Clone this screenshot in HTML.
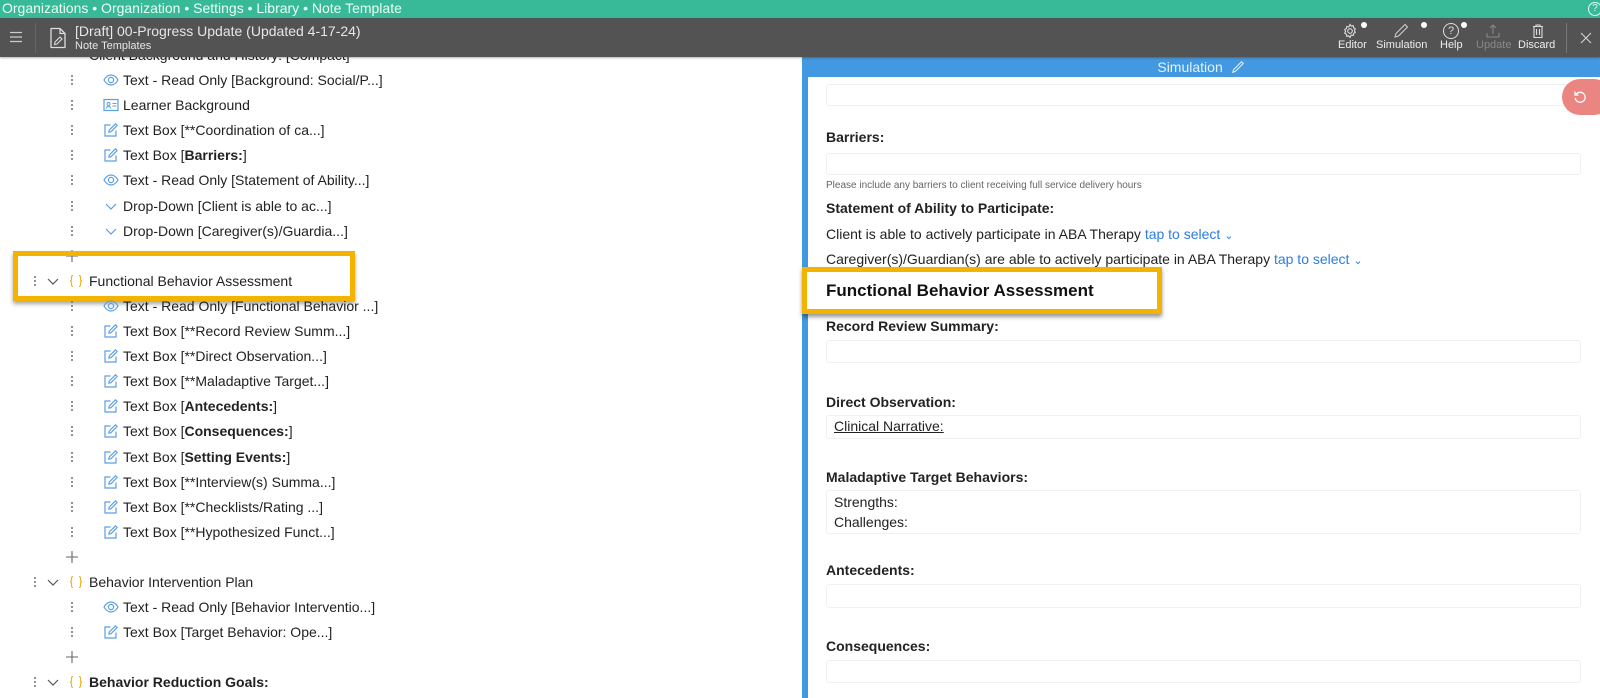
<!DOCTYPE html>
<html><head><meta charset="utf-8">
<style>
*{margin:0;padding:0;box-sizing:border-box}
body{width:1600px;height:698px;overflow:hidden;background:#fff;font-family:"Liberation Sans",sans-serif;color:#222;position:relative}
.a{position:absolute;white-space:nowrap}
.row{position:absolute;height:18px;line-height:18px;font-size:14px;color:#222}
.dots{position:absolute;width:2px;height:12px;top:3px;background:radial-gradient(circle,#777 0.9px,transparent 1.1px) 0 0/2px 4px repeat-y}
.ic{position:absolute;top:1px}
.lbl{position:absolute;font-size:14px;font-weight:bold;color:#222}
.inp{position:absolute;left:826px;width:755px;border:1px solid #f0f0f0;border-radius:3px;background:#fff}
.txt{font-size:14px;color:#222}
</style></head><body>

<div class="row" style="top:46px;left:89px;">Client Background and History: [Compact]</div>

<svg width="0" height="0" style="position:absolute">
<defs>
<symbol id="eye" viewBox="0 0 16 16"><path d="M1 8C3 4.5 5.5 3 8 3s5 1.5 7 5c-2 3.5-4.5 5-7 5S3 11.5 1 8z" fill="none" stroke="#5a9ee8" stroke-width="1.2"/><circle cx="8" cy="8" r="2.6" fill="none" stroke="#5a9ee8" stroke-width="1.2"/></symbol>
<symbol id="pen" viewBox="0 0 16 16"><path d="M13 8.5V14H2V3h5.5" fill="none" stroke="#5a9ee8" stroke-width="1.2"/><path d="M12.5 1.8l1.7 1.7L8 9.7 5.8 10.2 6.3 8z" fill="none" stroke="#5a9ee8" stroke-width="1.2" stroke-linejoin="round"/></symbol>
<symbol id="card" viewBox="0 0 16 16"><rect x="1" y="2.5" width="14" height="11" fill="none" stroke="#5a9ee8" stroke-width="1.2"/><circle cx="5.5" cy="7" r="1.5" fill="none" stroke="#5a9ee8" stroke-width="1"/><path d="M3 11.5c.5-1.5 1.5-2 2.5-2s2 .5 2.5 2M9.5 6.5h4M9.5 9h4" stroke="#5a9ee8" stroke-width="1" fill="none"/></symbol>
<symbol id="chev" viewBox="0 0 16 16"><path d="M3 6l5 5 5-5" fill="none" stroke="#5a9ee8" stroke-width="1.2"/></symbol>
<symbol id="chevg" viewBox="0 0 16 16"><path d="M3 6l5 5 5-5" fill="none" stroke="#555" stroke-width="1.2"/></symbol>
<symbol id="br" viewBox="0 0 16 16"><path d="M5 2.5C3.5 2.5 3.5 3.5 3.5 5v1.5C3.5 7.5 2.5 8 2 8c.5 0 1.5.5 1.5 1.5V11c0 1.5 0 2.5 1.5 2.5M11 2.5c1.5 0 1.5 1 1.5 2.5v1.5c0 1 1 1.5 1.5 1.5-.5 0-1.5.5-1.5 1.5V11c0 1.5 0 2.5-1.5 2.5" fill="none" stroke="#f0b429" stroke-width="1.2"/></symbol>
<symbol id="plus" viewBox="0 0 16 16"><path d="M8 2v12M2 8h12" stroke="#666" stroke-width="1.1"/></symbol>
</defs></svg>

<div class="row" style="top:71px;left:0"><div class="dots" style="left:71px"></div><svg class="ic" style="left:103px" width="16" height="16"><use href="#eye"/></svg><span class="a" style="left:123px">Text - Read Only [Background: Social/P...]</span></div>
<div class="row" style="top:96px;left:0"><div class="dots" style="left:71px"></div><svg class="ic" style="left:103px" width="16" height="16"><use href="#card"/></svg><span class="a" style="left:123px">Learner Background</span></div>
<div class="row" style="top:121px;left:0"><div class="dots" style="left:71px"></div><svg class="ic" style="left:103px" width="16" height="16"><use href="#pen"/></svg><span class="a" style="left:123px">Text Box [**Coordination of ca...]</span></div>
<div class="row" style="top:146px;left:0"><div class="dots" style="left:71px"></div><svg class="ic" style="left:103px" width="16" height="16"><use href="#pen"/></svg><span class="a" style="left:123px">Text Box [<b>Barriers:</b>]</span></div>
<div class="row" style="top:171px;left:0"><div class="dots" style="left:71px"></div><svg class="ic" style="left:103px" width="16" height="16"><use href="#eye"/></svg><span class="a" style="left:123px">Text - Read Only [Statement of Ability...]</span></div>
<div class="row" style="top:197px;left:0"><div class="dots" style="left:71px"></div><svg class="ic" style="left:103px" width="16" height="16"><use href="#chev"/></svg><span class="a" style="left:123px">Drop-Down [Client is able to ac...]</span></div>
<div class="row" style="top:222px;left:0"><div class="dots" style="left:71px"></div><svg class="ic" style="left:103px" width="16" height="16"><use href="#chev"/></svg><span class="a" style="left:123px">Drop-Down [Caregiver(s)/Guardia...]</span></div>
<div class="row" style="top:247px;left:0"><svg class="ic" style="left:64px" width="16" height="16"><use href="#plus"/></svg></div>

<div class="row" style="top:272px;left:0"><div class="dots" style="left:34px"></div><svg class="ic" style="left:45px" width="16" height="16"><use href="#chevg"/></svg><svg class="ic" style="left:68px" width="16" height="16"><use href="#br"/></svg><span class="a" style="left:89px">Functional Behavior Assessment</span></div>
<div class="a" style="left:13px;top:251px;width:342px;height:50px;border:5px solid #f5b301;box-shadow:0 3px 4px rgba(0,0,0,.35)"></div>

<div class="row" style="top:297px;left:0"><div class="dots" style="left:71px"></div><svg class="ic" style="left:103px" width="16" height="16"><use href="#eye"/></svg><span class="a" style="left:123px">Text - Read Only [Functional Behavior ...]</span></div>
<div class="row" style="top:322px;left:0"><div class="dots" style="left:71px"></div><svg class="ic" style="left:103px" width="16" height="16"><use href="#pen"/></svg><span class="a" style="left:123px">Text Box [**Record Review Summ...]</span></div>
<div class="row" style="top:347px;left:0"><div class="dots" style="left:71px"></div><svg class="ic" style="left:103px" width="16" height="16"><use href="#pen"/></svg><span class="a" style="left:123px">Text Box [**Direct Observation...]</span></div>
<div class="row" style="top:372px;left:0"><div class="dots" style="left:71px"></div><svg class="ic" style="left:103px" width="16" height="16"><use href="#pen"/></svg><span class="a" style="left:123px">Text Box [**Maladaptive Target...]</span></div>
<div class="row" style="top:397px;left:0"><div class="dots" style="left:71px"></div><svg class="ic" style="left:103px" width="16" height="16"><use href="#pen"/></svg><span class="a" style="left:123px">Text Box [<b>Antecedents:</b>]</span></div>
<div class="row" style="top:422px;left:0"><div class="dots" style="left:71px"></div><svg class="ic" style="left:103px" width="16" height="16"><use href="#pen"/></svg><span class="a" style="left:123px">Text Box [<b>Consequences:</b>]</span></div>
<div class="row" style="top:448px;left:0"><div class="dots" style="left:71px"></div><svg class="ic" style="left:103px" width="16" height="16"><use href="#pen"/></svg><span class="a" style="left:123px">Text Box [<b>Setting Events:</b>]</span></div>
<div class="row" style="top:473px;left:0"><div class="dots" style="left:71px"></div><svg class="ic" style="left:103px" width="16" height="16"><use href="#pen"/></svg><span class="a" style="left:123px">Text Box [**Interview(s) Summa...]</span></div>
<div class="row" style="top:498px;left:0"><div class="dots" style="left:71px"></div><svg class="ic" style="left:103px" width="16" height="16"><use href="#pen"/></svg><span class="a" style="left:123px">Text Box [**Checklists/Rating ...]</span></div>
<div class="row" style="top:523px;left:0"><div class="dots" style="left:71px"></div><svg class="ic" style="left:103px" width="16" height="16"><use href="#pen"/></svg><span class="a" style="left:123px">Text Box [**Hypothesized Funct...]</span></div>
<div class="row" style="top:548px;left:0"><svg class="ic" style="left:64px" width="16" height="16"><use href="#plus"/></svg></div>

<div class="row" style="top:573px;left:0"><div class="dots" style="left:34px"></div><svg class="ic" style="left:45px" width="16" height="16"><use href="#chevg"/></svg><svg class="ic" style="left:68px" width="16" height="16"><use href="#br"/></svg><span class="a" style="left:89px">Behavior Intervention Plan</span></div>
<div class="row" style="top:598px;left:0"><div class="dots" style="left:71px"></div><svg class="ic" style="left:103px" width="16" height="16"><use href="#eye"/></svg><span class="a" style="left:123px">Text - Read Only [Behavior Interventio...]</span></div>
<div class="row" style="top:623px;left:0"><div class="dots" style="left:71px"></div><svg class="ic" style="left:103px" width="16" height="16"><use href="#pen"/></svg><span class="a" style="left:123px">Text Box [Target Behavior: Ope...]</span></div>
<div class="row" style="top:648px;left:0"><svg class="ic" style="left:64px" width="16" height="16"><use href="#plus"/></svg></div>
<div class="row" style="top:673px;left:0"><div class="dots" style="left:34px"></div><svg class="ic" style="left:45px" width="16" height="16"><use href="#chevg"/></svg><svg class="ic" style="left:68px" width="16" height="16"><use href="#br"/></svg><span class="a" style="left:89px;font-weight:bold">Behavior Reduction Goals:</span></div>

<!-- right panel -->
<div class="a" style="left:802px;top:57px;width:798px;height:641px;background:#fff;border-left:6px solid #4299e1"></div>
<div class="a" style="left:802px;top:57px;width:798px;height:20px;background:#4299e1;color:#e6f1fc;font-size:14px;line-height:20px;text-align:center">Simulation <svg width="14" height="14" viewBox="0 0 16 16" style="vertical-align:-2px;margin-left:4px"><path d="M12 2l2 2-9 9-3 1 1-3z" fill="none" stroke="#e6f1fc" stroke-width="1.2"/></svg></div>

<div class="inp" style="top:84px;height:22px"></div>
<div class="lbl" style="left:826px;top:129px">Barriers:</div>
<div class="inp" style="top:153px;height:22px"></div>
<div class="a" style="left:826px;top:180px;font-size:10px;color:#666">Please include any barriers to client receiving full service delivery hours</div>
<div class="lbl" style="left:826px;top:200px">Statement of Ability to Participate:</div>
<div class="a txt" style="left:826px;top:226px">Client is able to actively participate in ABA Therapy <span style="color:#2b7de0">tap to select</span> <span style="color:#2b7de0;font-size:11px">&#8964;</span></div>
<div class="a txt" style="left:826px;top:251px">Caregiver(s)/Guardian(s) are able to actively participate in ABA Therapy <span style="color:#2b7de0">tap to select</span> <span style="color:#2b7de0;font-size:11px">&#8964;</span></div>
<div class="a" style="left:802px;top:267px;width:360px;height:47px;border:5px solid #f5b301;background:#fff;box-shadow:0 3px 4px rgba(0,0,0,.4)"></div>
<div class="a" style="left:826px;top:281px;font-size:17px;font-weight:bold;color:#111">Functional Behavior Assessment</div>
<div class="lbl" style="left:826px;top:318px">Record Review Summary:</div>
<div class="inp" style="top:340px;height:23px"></div>
<div class="lbl" style="left:826px;top:394px">Direct Observation:</div>
<div class="inp" style="top:415px;height:24px"></div>
<div class="a txt" style="left:834px;top:418px;text-decoration:underline">Clinical Narrative:</div>
<div class="lbl" style="left:826px;top:469px">Maladaptive Target Behaviors:</div>
<div class="inp" style="top:490px;height:44px"></div>
<div class="a txt" style="left:834px;top:494px">Strengths:</div>
<div class="a txt" style="left:834px;top:514px">Challenges:</div>
<div class="lbl" style="left:826px;top:562px">Antecedents:</div>
<div class="inp" style="top:584px;height:24px"></div>
<div class="lbl" style="left:826px;top:638px">Consequences:</div>
<div class="inp" style="top:660px;height:23px"></div>

<div class="a" style="left:1562px;top:79px;width:50px;height:36px;border-radius:18px;background:#eb8582"></div>
<svg class="a" style="left:1572px;top:89px" width="16" height="16" viewBox="0 0 16 16"><path d="M4 5.5A5 5 0 1 1 3.2 9" fill="none" stroke="#fff" stroke-width="1.3"/><path d="M3 2.5v3.5h3.5" fill="none" stroke="#fff" stroke-width="1.3"/></svg>

<!-- top bars -->
<div class="a" style="left:0;top:0;width:1600px;height:18px;background:#38b997;color:#eafff7;font-size:14px;line-height:17px;padding-left:2px">Organizations • Organization • Settings • Library • Note Template</div>
<div class="a" style="left:1588px;top:2px;width:14px;height:14px;border:1.3px solid #dff;border-radius:50%;color:#dff;font-size:10px;line-height:12px;text-align:center">?</div>
<div class="a" style="left:0;top:18px;width:1600px;height:39px;background:#535353;box-shadow:0 1px 2px rgba(0,0,0,.3)"></div>
<svg class="a" style="left:9px;top:31px" width="14" height="12"><path d="M1 1.5h12M1 6h12M1 10.5h12" stroke="#ccc" stroke-width="1.2"/></svg>
<div class="a" style="left:35px;top:23px;width:1px;height:30px;background:#666"></div>
<svg class="a" style="left:49px;top:27px" width="18" height="22" viewBox="0 0 18 22"><path d="M2 1.5h9l5 5V20.5H2z" fill="none" stroke="#ddd" stroke-width="1.3" stroke-linejoin="round"/><path d="M11 1.5v5h5" fill="none" stroke="#ddd" stroke-width="1.2"/><path d="M11 10l2 2-5 5-2.5.5.5-2.5z" fill="none" stroke="#ddd" stroke-width="1.1"/></svg>
<div class="a" style="left:75px;top:23px;font-size:14px;color:#e6e6e6">[Draft] 00-Progress Update (Updated 4-17-24)</div>
<div class="a" style="left:75px;top:40px;font-size:11px;color:#e6e6e6">Note Templates</div>

<svg class="a" style="left:1342px;top:23px" width="16" height="16" viewBox="0 0 16 16"><circle cx="8" cy="8" r="2.3" fill="none" stroke="#ddd" stroke-width="1.1"/><path d="M8 1.5l1.2 1.6 2-.4.4 2 1.7 1.1-.9 1.8.9 1.8-1.7 1.1-.4 2-2-.4L8 14.5l-1.2-1.6-2 .4-.4-2-1.7-1.1.9-1.8-.9-1.8 1.7-1.1.4-2 2 .4z" fill="none" stroke="#ddd" stroke-width="1.1"/></svg>
<div class="a" style="left:1361px;top:22px;width:6px;height:6px;border-radius:50%;background:#fff"></div>
<div class="a" style="left:1338px;top:39px;font-size:11px;color:#eee">Editor</div>
<svg class="a" style="left:1393px;top:23px" width="16" height="16" viewBox="0 0 16 16"><path d="M12 1.5l2.5 2.5-9 9L2 14l1-3.5z" fill="none" stroke="#ccc" stroke-width="1.1"/></svg>
<div class="a" style="left:1421px;top:22px;width:6px;height:6px;border-radius:50%;background:#fff"></div>
<div class="a" style="left:1376px;top:39px;font-size:11px;color:#eee">Simulation</div>
<div class="a" style="left:1443px;top:23px;width:16px;height:16px;border:1.2px solid #ddd;border-radius:50%;color:#ddd;font-size:11px;line-height:14px;text-align:center">?</div>
<div class="a" style="left:1461px;top:22px;width:6px;height:6px;border-radius:50%;background:#fff"></div>
<div class="a" style="left:1440px;top:39px;font-size:11px;color:#eee">Help</div>
<svg class="a" style="left:1485px;top:23px" width="16" height="16" viewBox="0 0 16 16"><path d="M8 11V2M5 5l3-3 3 3M2 10v4h12v-4" fill="none" stroke="#888" stroke-width="1.1"/></svg>
<div class="a" style="left:1476px;top:39px;font-size:11px;color:#8a8a8a">Update</div>
<svg class="a" style="left:1530px;top:23px" width="16" height="16" viewBox="0 0 16 16"><path d="M3 3.5h10M6 3.5V2h4v1.5M4 3.5v11h8v-11M6.5 6v6M9.5 6v6" fill="none" stroke="#ddd" stroke-width="1.1"/></svg>
<div class="a" style="left:1518px;top:39px;font-size:11px;color:#eee">Discard</div>
<div class="a" style="left:1566px;top:23px;width:1px;height:30px;background:#777"></div>
<svg class="a" style="left:1580px;top:32px" width="12" height="12"><path d="M1 1l10 10M11 1L1 11" stroke="#ccc" stroke-width="1.2"/></svg>
</body></html>
